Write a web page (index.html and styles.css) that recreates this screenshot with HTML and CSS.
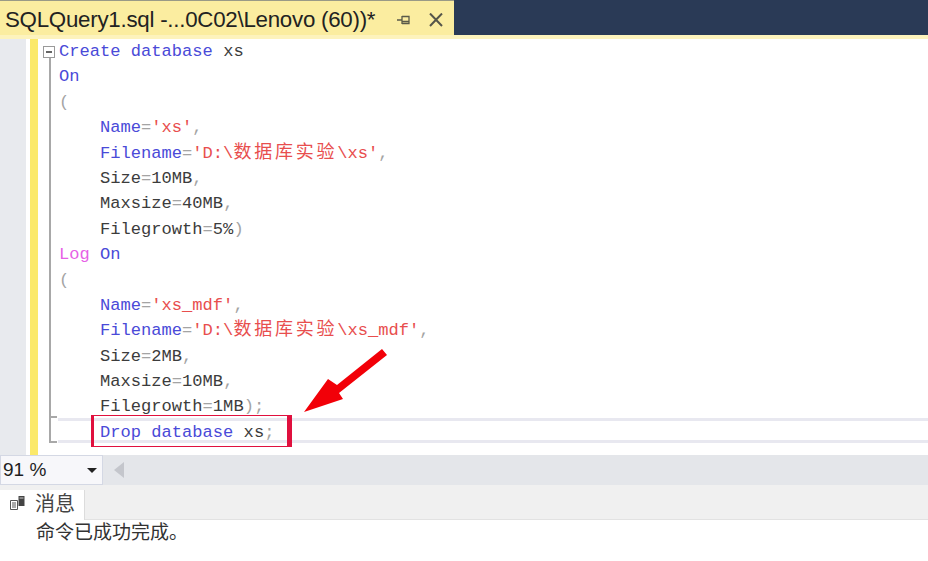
FILE: index.html
```html
<!DOCTYPE html>
<html lang="zh">
<head>
<meta charset="utf-8">
<title>SQLQuery1.sql</title>
<link rel="stylesheet" href="styles.css">
</head>
<body>
<div class="app">
  <header class="tabbar">
    <div class="tab">
      <span class="tab-title">SQLQuery1.sql -...0C02\Lenovo (60))*</span>
      <svg class="pin" width="16" height="14" viewBox="0 0 16 14"><path d="M1 7h5M6 3v8M6 3.500h7v7H6M6 8.500h7" fill="none" stroke="#5a5a48" stroke-width="1.300"/></svg>
      <svg class="close" width="16" height="14" viewBox="0 0 16 14"><path d="M2 0.500 14 13M14 0.500 2 13" fill="none" stroke="#55554a" stroke-width="2"/></svg>
    </div>
  </header>
  <div class="tab-rule"></div>
  <main class="editor">
    <div class="margin"></div>
    <div class="gutter-gap"></div>
    <div class="changes"></div>
    <div class="code-area">
      <div class="fold-box"></div>
      <div class="fold-line"></div>
      <div class="fold-tick-top"></div>
      <div class="fold-tick-end"></div>
      <div class="code">
        <div class="line"><span class="kw">Create database</span> xs</div>
        <div class="line"><span class="kw">On</span></div>
        <div class="line"><span class="op">(</span></div>
        <div class="line in"><span class="kw">Name</span><span class="op">=</span><span class="str">'xs'</span><span class="op">,</span></div>
        <div class="line in"><span class="kw">Filename</span><span class="op">=</span><span class="str">'D:\<span class="cjk">数据库实验</span>\xs'</span><span class="op">,</span></div>
        <div class="line in">Size<span class="op">=</span>10MB<span class="op">,</span></div>
        <div class="line in">Maxsize<span class="op">=</span>40MB<span class="op">,</span></div>
        <div class="line in">Filegrowth<span class="op">=</span>5%<span class="op">)</span></div>
        <div class="line"><span class="fn">Log</span> <span class="kw">On</span></div>
        <div class="line"><span class="op">(</span></div>
        <div class="line in"><span class="kw">Name</span><span class="op">=</span><span class="str">'xs_mdf'</span><span class="op">,</span></div>
        <div class="line in"><span class="kw">Filename</span><span class="op">=</span><span class="str">'D:\<span class="cjk">数据库实验</span>\xs_mdf'</span><span class="op">,</span></div>
        <div class="line in">Size<span class="op">=</span>2MB<span class="op">,</span></div>
        <div class="line in">Maxsize<span class="op">=</span>10MB<span class="op">,</span></div>
        <div class="line in">Filegrowth<span class="op">=</span>1MB<span class="op">);</span></div>
        <div class="line in current"><span class="kw">Drop database</span> xs<span class="op">;</span></div>
      </div>
      <div class="callout"></div>
      <svg class="arrow" width="84" height="64" viewBox="0 0 84 64"><path d="M0 63 24 30 33 36 78 0 83 6 35 44 39 50Z" fill="#f20008"/></svg>
    </div>
  </main>
  <div class="statusbar">
    <div class="zoom-box"><span class="zoom-val">91 %</span><span class="zoom-caret"></span></div>
    <span class="scroll-left"></span>
  </div>
  <nav class="result-tabs">
    <div class="result-tab">
      <svg width="17" height="16" viewBox="0 0 17 16"><path d="M1.500 5.500h7v9h-7z" fill="#fff" stroke="#555"/><path d="M3 8h4M3 10h4M3 12h4" stroke="#555"/><path d="M9.500 1h6v10h-6z" fill="#444"/><path d="M10.500 3h4" stroke="#ccc"/></svg>
      <span class="result-label">消息</span>
    </div>
  </nav>
  <section class="messages">命令已成功完成。</section>
</div>
</body>
</html>
```
FILE: styles.css
```css
*, *::before, *::after { box-sizing: border-box; }
html, body { margin: 0; height: 100%; }
body { overflow: hidden; background: #fff; }
.app { width: 928px; height: 561px; display: flex; flex-direction: column; }

.tabbar { height: 35px; flex: none; background: #2a3a56; }
.tab {
  width: 454px; height: 35px; padding: 3px 0 0 5px;
  display: flex; align-items: center;
  background: #fbeda0; border-top: 1px solid #9a9a86;
}
.tab-title {
  font: 22.300px/30px "Liberation Sans", Arial, sans-serif;
  color: #222; white-space: nowrap; width: 391px; letter-spacing: -0.250px;
}
.pin { margin-left: 0; }
.close { margin-left: 16px; }
.tab-rule { height: 4px; flex: none; background: #fdf3bd; }

.editor { height: 416px; flex: none; display: flex; background: #fff; }
.margin { width: 26px; background: #e8eaee; }
.gutter-gap { width: 4px; background: #fff; }
.changes { width: 8px; background: #fbe96a; }
.code-area { flex: 1; position: relative; }
.line {
  height: 25.400px; padding-left: 21px;
  font: 17.100px/25.400px "Liberation Mono", "Courier New", "Noto Sans CJK SC", monospace;
  color: #3c3c3c; white-space: pre;
}
.line.in { padding-left: 62px; }
.line.current { position: relative; }
.line.current::before {
  content: ""; position: absolute;
  left: 20px; right: 0; top: -2px; height: 25px;
  border: solid #e8e8f0; border-width: 3px 0;
}
.kw { color: #4a4ad8; position: relative; }
.op { color: #a4a4a4; position: relative; }
.str { color: #e84e4e; }
.fn { color: #e660e6; }
.cjk { font-family: "Noto Sans CJK SC", sans-serif; font-size: 18px; letter-spacing: 2.750px; line-height: 0; }

.fold-box {
  position: absolute; left: 5px; top: 7px; width: 12px; height: 12px;
  border: 1px solid #9a9a9a; background: #fff;
}
.fold-box::after {
  content: ""; position: absolute; left: 2px; right: 2px; top: 4px; height: 2px; background: #666;
}
.fold-line { position: absolute; left: 11px; top: 19px; width: 2px; height: 385px; background: #a8a8a8; }
.fold-tick-top { position: absolute; left: 11px; top: 377px; width: 8px; height: 2px; background: #a8a8a8; }
.fold-tick-end { position: absolute; left: 11px; top: 402px; width: 8px; height: 2px; background: #a8a8a8; }

.callout {
  position: absolute; left: 53px; top: 376px; width: 201px; height: 32px;
  border: solid #e0103e; border-width: 1.500px 5px 1.500px 3px;
}
.arrow { position: absolute; left: 266px; top: 310px; }

.statusbar { height: 30px; flex: none; display: flex; align-items: center; background: #e4e6ea; }
.zoom-box {
  width: 103px; height: 30px; padding: 0 2px; display: flex; align-items: center; justify-content: space-between;
  background: #f7f7fa; border: 1px solid #d4d8e4;
}
.zoom-val { font: 19px/28px "Liberation Sans", Arial, sans-serif; color: #1e1e1e; }
.zoom-caret {
  width: 0; height: 0; margin-right: 3px;
  border: 5px solid transparent; border-top: 5px solid #222; border-bottom: 0;
}
.scroll-left {
  width: 0; height: 0; margin-left: 11px;
  border: 8px solid transparent; border-right: 10px solid #c4c6cc; border-left: 0;
}

.result-tabs { height: 35px; flex: none; display: flex; align-items: flex-end; background: #f0f0f0; border-bottom: 1px solid #e2e2e2; }
.result-tab {
  width: 85px; height: 30px; padding: 0 0 4px 9px; display: flex; align-items: center; gap: 9px;
  background: #fff; margin-bottom: -1px; border-right: 1px solid #dcdcdc;
}
.result-label { font: 20px/26px "Noto Sans CJK SC", sans-serif; color: #444; }
.messages {
  flex: 1; padding: 0 0 0 36px; margin-top: -1px;
  font: 19px/24px "Noto Sans CJK SC", sans-serif; color: #333; background: transparent;
}
```
